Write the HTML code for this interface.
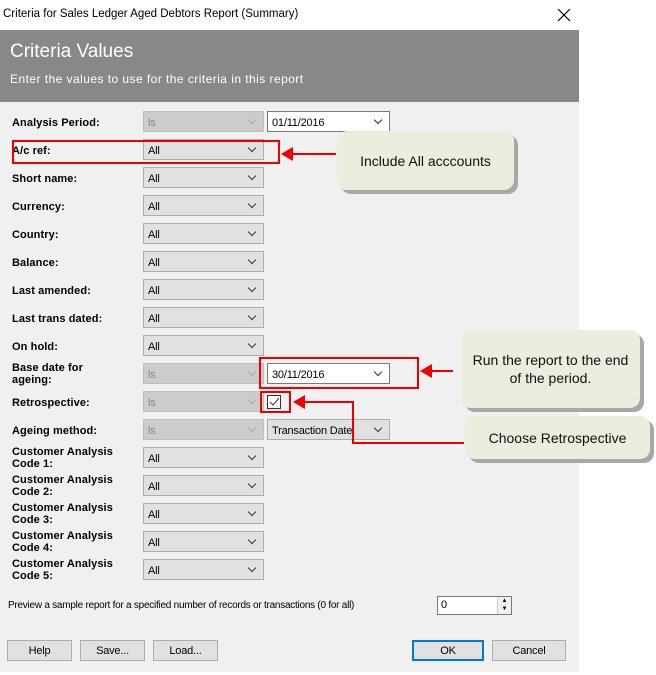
<!DOCTYPE html>
<html><head><meta charset="utf-8"><style>
*{margin:0;padding:0;box-sizing:border-box}
body{width:656px;height:675px;background:#fff;position:relative;font-family:"Liberation Sans",sans-serif;overflow:hidden}
.a{position:absolute}
.title{left:3px;top:8px;font-size:11.5px;color:#000}
.hdr{left:0;top:30px;width:579px;height:72px;background:#888}
.body{left:0;top:102px;width:579px;height:570px;background:#f0f0f0}
.lbl{position:absolute;left:12px;font-size:11px;font-weight:bold;color:#000;line-height:12px;letter-spacing:0.1px}
.cb{position:absolute;left:143px;width:121px;height:21px;background:#e1e1e1;border:1px solid #adadad;font-size:11px;padding:5px 0 0 4px;color:#000;letter-spacing:-0.2px}
.cb.dis{background:#ccc;border-color:#bfbfbf;color:#888}
.cb::after{content:"";position:absolute;right:8px;top:5px;width:5px;height:5px;border-right:1px solid #333;border-bottom:1px solid #333;transform:rotate(45deg)}
.cb.dis::after{border-color:#aaa}
.w{background:#fff;border-color:#7a7a7a;left:267px;width:123px}
.red{position:absolute;border:2px solid #e00}
.rl{position:absolute;background:#e00}
.tri{position:absolute;width:0;height:0;border-top:7px solid transparent;border-bottom:7px solid transparent;border-right:12px solid #e00}
.co{position:absolute;background:#ebeddf;border-radius:10px;box-shadow:4px 4px 0 #a8a8a8;font-size:14px;color:#111;text-align:center;display:flex;align-items:center;justify-content:center;line-height:18px}
.btn{position:absolute;top:640px;height:21px;background:#e1e1e1;border:1px solid #adadad;font-size:11px;text-align:center;line-height:21px;letter-spacing:-0.2px}
</style></head><body>
<div class="a title">Criteria for Sales Ledger Aged Debtors Report (Summary)</div>
<svg class="a" style="left:557px;top:8px" width="14" height="14"><path d="M1 1L13 13M13 1L1 13" stroke="#000" stroke-width="1.2"/></svg>
<div class="a hdr"><div style="position:absolute;left:10px;top:11px;font-size:19px;color:#fff">Criteria Values</div><div style="position:absolute;left:10px;top:42px;font-size:12px;letter-spacing:0.45px;color:#fff">Enter the values to use for the criteria in this report</div></div>
<div class="a body"></div>

<div class="lbl" style="top:117px">Analysis Period:</div>
<div class="cb dis" style="top:111px">ls</div>
<div class="cb w" style="top:111px">01/11/2016</div>

<div class="lbl" style="top:145px">A/c ref:</div><div class="cb" style="top:139px">All</div>
<div class="lbl" style="top:173px">Short name:</div><div class="cb" style="top:167px">All</div>
<div class="lbl" style="top:201px">Currency:</div><div class="cb" style="top:195px">All</div>
<div class="lbl" style="top:229px">Country:</div><div class="cb" style="top:223px">All</div>
<div class="lbl" style="top:257px">Balance:</div><div class="cb" style="top:251px">All</div>
<div class="lbl" style="top:285px">Last amended:</div><div class="cb" style="top:279px">All</div>
<div class="lbl" style="top:313px">Last trans dated:</div><div class="cb" style="top:307px">All</div>
<div class="lbl" style="top:341px">On hold:</div><div class="cb" style="top:335px">All</div>
<div class="lbl" style="top:362px">Base date for<br>ageing:</div>
<div class="cb dis" style="top:363px">ls</div>
<div class="cb w" style="top:363px">30/11/2016</div>
<div class="lbl" style="top:397px">Retrospective:</div>
<div class="cb dis" style="top:391px">ls</div>
<div class="a" style="left:267px;top:395px;width:14px;height:14px;border:1px solid #333;background:#fff"><svg width="12" height="12" style="position:absolute;left:0;top:0"><path d="M2 6L5 9L11 2" stroke="#333" fill="none" stroke-width="1"/></svg></div>
<div class="lbl" style="top:425px">Ageing method:</div>
<div class="cb dis" style="top:419px">ls</div>
<div class="cb" style="top:419px;left:267px;width:123px">Transaction Date</div>
<div class="lbl" style="top:446px">Customer Analysis<br>Code 1:</div><div class="cb" style="top:447px">All</div>
<div class="lbl" style="top:474px">Customer Analysis<br>Code 2:</div><div class="cb" style="top:475px">All</div>
<div class="lbl" style="top:502px">Customer Analysis<br>Code 3:</div><div class="cb" style="top:503px">All</div>
<div class="lbl" style="top:530px">Customer Analysis<br>Code 4:</div><div class="cb" style="top:531px">All</div>
<div class="lbl" style="top:558px">Customer Analysis<br>Code 5:</div><div class="cb" style="top:559px">All</div>

<div class="a" style="left:8px;top:600px;font-size:10px;letter-spacing:-0.25px">Preview a sample report for a specified number of records or transactions (0 for all)</div>
<div class="a" style="left:437px;top:596px;width:75px;height:19px;background:#fff;border:1px solid #7a7a7a;font-size:11px;padding:2px 3px">0
<div style="position:absolute;right:0;top:0;width:14px;height:17px;border-left:1px solid #ccc;background:#f0f0f0;font-size:6px;line-height:8px;text-align:center">▲<br>▼</div></div>

<div class="btn" style="left:7px;width:65px">Help</div>
<div class="btn" style="left:80px;width:65px">Save...</div>
<div class="btn" style="left:153px;width:65px">Load...</div>
<div class="btn" style="left:412px;width:72px;border:2px solid #0078d7;line-height:19px">OK</div>
<div class="btn" style="left:492px;width:74px">Cancel</div>

<div class="red" style="left:12px;top:140px;width:268px;height:24px"></div>
<div class="rl" style="left:292px;top:153px;width:44px;height:2px"></div>
<div class="tri" style="left:281px;top:147px"></div>
<div class="co" style="left:337px;top:131px;width:177px;height:59px">Include All acccounts</div>

<div class="red" style="left:259px;top:357px;width:160px;height:32px"></div>
<div class="rl" style="left:431px;top:370px;width:22px;height:2px"></div>
<div class="tri" style="left:420px;top:364px"></div>
<div class="co" style="left:461px;top:330px;width:179px;height:78px">Run the report to the end<br>of the period.</div>

<div class="red" style="left:260px;top:391px;width:31px;height:22px"></div>
<div class="rl" style="left:304px;top:401px;width:50px;height:2px"></div>
<div class="rl" style="left:352px;top:401px;width:2px;height:43px"></div>
<div class="rl" style="left:352px;top:442px;width:112px;height:2px"></div>
<div class="tri" style="left:293px;top:395px"></div>
<div class="co" style="left:465px;top:416px;width:185px;height:43px">Choose Retrospective</div>
</body></html>
